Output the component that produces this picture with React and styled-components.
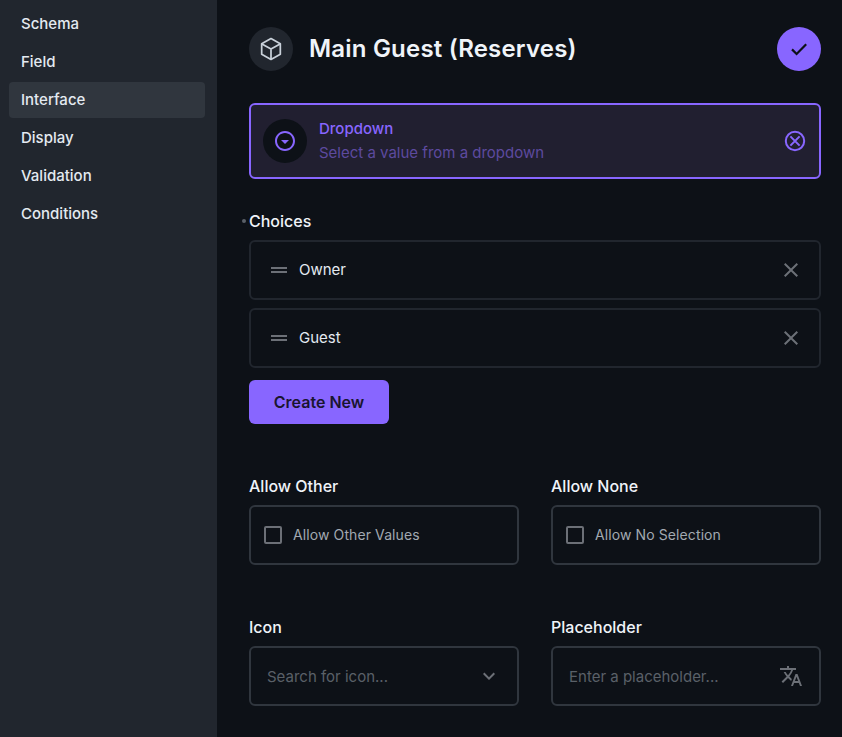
import React from 'react';
import styled, { createGlobalStyle } from 'styled-components';
import {
  MdClose,
  MdDragHandle,
  MdExpandMore,
  MdOutlineArrowDropDownCircle,
  MdTranslate,
} from 'react-icons/md';

const TABS = ['Schema', 'Field', 'Interface', 'Display', 'Validation', 'Conditions'];
const CHOICES = ['Owner', 'Guest'];

function CubeIcon() {
  return (
    <svg width="26" height="26" viewBox="0 0 24 24" fill="none" stroke="currentColor" strokeWidth="1.6" strokeLinejoin="round">
      <path d="M12 2.4 20.6 7.2V16.8L12 21.6 3.4 16.8V7.2Z" />
      <path d="M3.6 7.3 12 12 20.4 7.3M12 12V21.4" />
    </svg>
  );
}

function CheckIcon() {
  return (
    <svg width="24" height="24" viewBox="0 0 24 24" fill="none" stroke="currentColor" strokeWidth="2.2">
      <path d="M5 12.4 9.6 17 19.2 7.2" />
    </svg>
  );
}

function ClearIcon() {
  return (
    <svg width="24" height="24" viewBox="0 0 24 24" fill="none" stroke="currentColor" strokeWidth="2">
      <circle cx="12" cy="12" r="9.2" />
      <path d="M7.4 7.4 16.6 16.6M16.6 7.4 7.4 16.6" />
    </svg>
  );
}

export default function App() {
  return (
    <>
      <GlobalStyle />
      <Page>
        <Sidebar>
          {TABS.map(tab => (
            <Tab key={tab} $active={tab === 'Interface'}>
              {tab}
            </Tab>
          ))}
        </Sidebar>
        <Main>
          <Header>
            <HeaderIcon>
              <CubeIcon />
            </HeaderIcon>
            <Title>Main Guest (Reserves)</Title>
            <SaveButton>
              <CheckIcon />
            </SaveButton>
          </Header>

          <InterfaceCard>
            <CardIcon>
              <MdOutlineArrowDropDownCircle size={24} />
            </CardIcon>
            <CardText>
              <CardName>Dropdown</CardName>
              <CardDescription>Select a value from a dropdown</CardDescription>
            </CardText>
            <CardClear>
              <ClearIcon />
            </CardClear>
          </InterfaceCard>

          <ChoicesLabel>Choices</ChoicesLabel>
          <ChoiceList>
            {CHOICES.map(choice => (
              <ChoiceRow key={choice}>
                <DragHandle>
                  <MdDragHandle size={24} />
                </DragHandle>
                <ChoiceName>{choice}</ChoiceName>
                <RemoveIcon>
                  <MdClose size={24} />
                </RemoveIcon>
              </ChoiceRow>
            ))}
          </ChoiceList>
          <CreateButton>Create New</CreateButton>

          <FieldGrid>
            <Field>
              <FieldLabel>Allow Other</FieldLabel>
              <InputBox>
                <Checkbox />
                <CheckboxText>Allow Other Values</CheckboxText>
              </InputBox>
            </Field>
            <Field>
              <FieldLabel>Allow None</FieldLabel>
              <InputBox>
                <Checkbox />
                <CheckboxText>Allow No Selection</CheckboxText>
              </InputBox>
            </Field>
            <Field>
              <FieldLabel>Icon</FieldLabel>
              <TextBox>
                <PlaceholderText>Search for icon...</PlaceholderText>
                <MdExpandMore size={24} />
              </TextBox>
            </Field>
            <Field>
              <FieldLabel>Placeholder</FieldLabel>
              <TextBox>
                <PlaceholderText>Enter a placeholder...</PlaceholderText>
                <MdTranslate size={24} />
              </TextBox>
            </Field>
          </FieldGrid>
        </Main>
      </Page>
    </>
  );
}

const GlobalStyle = createGlobalStyle`
  html, body {
    margin: 0;
    height: 100%;
    overflow: hidden;
    background: #0d1117;
  }

  * {
    box-sizing: border-box;
  }
`;

const Page = styled.div`
  display: flex;
  height: 737px;
  font-family: Inter, "Liberation Sans", sans-serif;
  color: #f0f4f9;
`;

const Sidebar = styled.nav`
  display: flex;
  flex-direction: column;
  gap: 2px;
  width: 217px;
  flex-shrink: 0;
  padding: 6px 12px 0 9px;
  background: #21262e;
`;

const Tab = styled.div`
  display: flex;
  align-items: center;
  height: 36px;
  padding: 0 12px 1px;
  border-radius: 4px;
  font-size: 15px;
  font-weight: 500;
  color: #e4eaf1;
  background: ${({ $active }) => ($active ? '#30363e' : 'transparent')};
`;

const Main = styled.main`
  flex: 1;
  padding: 27px 21px 0 32px;
`;

const Header = styled.header`
  display: flex;
  align-items: center;
  height: 44px;
  margin-bottom: 32px;
`;

const HeaderIcon = styled.div`
  display: flex;
  align-items: center;
  justify-content: center;
  width: 44px;
  height: 44px;
  border-radius: 50%;
  background: #21262e;
  color: #c9d1da;
`;

const Title = styled.h1`
  flex: 1;
  margin: 0 0 0 16px;
  font-size: 24px;
  font-weight: 600;
  line-height: 44px;
  letter-spacing: 0.2px;
  color: #f0f4f9;
`;

const SaveButton = styled.div`
  display: flex;
  align-items: center;
  justify-content: center;
  width: 44px;
  height: 44px;
  border-radius: 50%;
  background: #8866ff;
  color: #0d1117;
`;

const InterfaceCard = styled.div`
  display: flex;
  align-items: center;
  height: 76px;
  padding: 0 12px;
  border: 2px solid #8866ff;
  border-radius: 6px;
  background: #211f30;
`;

const CardIcon = styled.div`
  display: flex;
  align-items: center;
  justify-content: center;
  width: 44px;
  height: 44px;
  border-radius: 50%;
  background: #0d1117;
  color: #8866ff;
`;

const CardText = styled.div`
  flex: 1;
  display: flex;
  flex-direction: column;
  gap: 4px;
  margin-left: 12px;
`;

const CardName = styled.div`
  font-size: 15px;
  font-weight: 500;
  line-height: 20px;
  color: #8866ff;
`;

const CardDescription = styled.div`
  font-size: 15px;
  line-height: 20px;
  color: #5d4a9f;
`;

const CardClear = styled.div`
  display: flex;
  color: #8866ff;
`;

const ChoicesLabel = styled.div`
  position: relative;
  margin-top: 32px;
  margin-bottom: 9px;
  height: 20px;
  font-size: 16px;
  font-weight: 500;
  line-height: 20px;

  &::before {
    content: '';
    position: absolute;
    left: -7px;
    top: 8px;
    width: 4px;
    height: 4px;
    border-radius: 50%;
    background: #5a6068;
  }
`;

const ChoiceList = styled.div`
  display: flex;
  flex-direction: column;
  gap: 8px;
`;

const ChoiceRow = styled.div`
  display: flex;
  align-items: center;
  height: 60px;
  padding: 0 16px;
  border: 2px solid #21262e;
  border-radius: 6px;
`;

const DragHandle = styled.span`
  display: flex;
  color: #6c7077;
`;

const ChoiceName = styled.span`
  flex: 1;
  margin-left: 8px;
  padding-bottom: 2px;
  font-size: 15px;
  color: #e4eaf1;
`;

const RemoveIcon = styled.span`
  display: flex;
  color: #6c7077;
`;

const CreateButton = styled.button`
  display: block;
  width: 140px;
  height: 44px;
  margin-top: 12px;
  padding: 0;
  border: none;
  border-radius: 6px;
  font-family: inherit;
  font-size: 16px;
  font-weight: 600;
  background: #8866ff;
  color: #1a1530;
`;

const FieldGrid = styled.div`
  display: grid;
  grid-template-columns: 270px 270px;
  column-gap: 32px;
  row-gap: 52px;
  margin-top: 52px;
`;

const Field = styled.div`
  display: flex;
  flex-direction: column;
  gap: 9px;
`;

const FieldLabel = styled.div`
  height: 20px;
  font-size: 16px;
  font-weight: 500;
  line-height: 20px;
`;

const InputBox = styled.div`
  display: flex;
  align-items: center;
  gap: 11px;
  height: 60px;
  padding: 0 13px;
  border: 2px solid #30363e;
  border-radius: 6px;
`;

const Checkbox = styled.span`
  width: 18px;
  height: 18px;
  border: 2px solid #6c7077;
  border-radius: 2px;
`;

const CheckboxText = styled.span`
  padding-bottom: 2px;
  font-size: 14px;
  letter-spacing: 0.1px;
  color: #a2a9b1;
`;

const TextBox = styled.div`
  display: flex;
  align-items: center;
  justify-content: space-between;
  height: 60px;
  padding: 0 16px;
  border: 2px solid #30363e;
  border-radius: 6px;
  color: #6c7077;
`;

const PlaceholderText = styled.span`
  font-size: 15px;
  color: #5a6068;
`;
